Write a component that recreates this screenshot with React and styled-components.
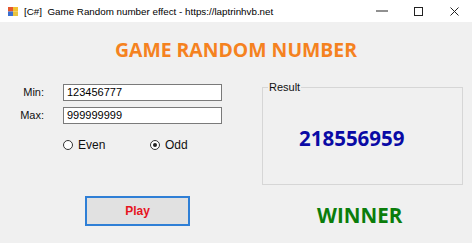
import styled, { createGlobalStyle } from "styled-components";

const GlobalStyle = createGlobalStyle`
  html, body {
    margin: 0;
    padding: 0;
    background: #ffffff;
  }
  * {
    box-sizing: border-box;
  }
`;

const Window = styled.div`
  width: 472px;
  height: 243px;
  display: flex;
  flex-direction: column;
  background: #f0f0f0;
  font-family: "Liberation Sans", Arial, sans-serif;
  color: #000;
`;

const TitleBar = styled.div`
  height: 22px;
  background: #ffffff;
  display: flex;
  align-items: center;
  padding-left: 8px;
`;

const TitleText = styled.div`
  margin-left: 6px;
  font-family: "Liberation Sans", Arial, sans-serif;
  font-size: 9.8px;
  color: #000;
  white-space: pre;
  flex: 1;
`;

const Caption = styled.div`
  display: flex;
  height: 100%;
`;

const CaptionButton = styled.div`
  width: 36px;
  height: 100%;
  display: flex;
  align-items: center;
  justify-content: center;
`;

const Body = styled.div`
  flex: 1;
  display: flex;
  flex-direction: column;
`;

const Heading = styled.h1`
  margin: 16px 0 0;
  text-align: center;
  font-family: "Open Sans", sans-serif;
  font-weight: 700;
  font-size: 19.4px;
  line-height: 24px;
  color: #f5821f;
`;

const Content = styled.div`
  display: flex;
  margin-top: 19px;
`;

const LeftCol = styled.div`
  width: 262px;
  display: flex;
  flex-direction: column;
  padding-top: 3px;
`;

const Fields = styled.div`
  display: grid;
  grid-template-columns: 44px 159px;
  column-gap: 19px;
  row-gap: 6px;
`;

const Label = styled.label`
  font-size: 11px;
  line-height: 17px;
  text-align: right;
  color: #111;
`;

const TextBox = styled.div`
  height: 17px;
  border: 1px solid #7a7a7a;
  background: #ffffff;
  font-size: 11px;
  line-height: 15px;
  padding-left: 3px;
  color: #000;
`;

const Options = styled.div`
  display: flex;
  margin: 14px 0 0 63px;
  height: 14px;
  align-items: center;
`;

const Option = styled.div`
  display: flex;
  align-items: center;
  width: ${(p) => p.width}px;
  font-size: 12px;
  color: #111;
`;

const Radio = styled.span`
  width: 10px;
  height: 10px;
  border-radius: 50%;
  border: 1px solid #333;
  background: #fff;
  margin-right: 5px;
  display: flex;
  align-items: center;
  justify-content: center;
  &::after {
    content: "";
    width: 4px;
    height: 4px;
    border-radius: 50%;
    background: ${(p) => (p.checked ? "#222" : "transparent")};
  }
`;

const PlayButton = styled.div`
  margin: 44px 0 0 85px;
  width: 105px;
  height: 30px;
  border: 2px solid #2f7fd6;
  background: #e1e1e1;
  display: flex;
  align-items: center;
  justify-content: center;
  font-weight: 700;
  font-size: 12px;
  color: #e6141e;
`;

const RightCol = styled.div`
  display: flex;
  flex-direction: column;
`;

const GroupBox = styled.fieldset`
  margin: 0;
  width: 201px;
  height: 104px;
  border: 1px solid #d6d6d6;
  padding: 0;
`;

const Legend = styled.legend`
  margin-left: 5px;
  padding: 0 1px;
  font-size: 11px;
  line-height: 13px;
  color: #111;
`;

const ResultArea = styled.div`
  height: 88px;
  display: flex;
  align-items: center;
  padding-left: 36px;
`;

const ResultNumber = styled.div`
  font-family: "Open Sans", sans-serif;
  font-weight: 700;
  font-size: 20.5px;
  color: #0a0aa5;
`;

const Winner = styled.div`
  margin: 18px 0 0 55px;
  font-family: "Open Sans", sans-serif;
  font-weight: 700;
  font-size: 20.6px;
  line-height: 24px;
  color: #0b7d0b;
`;

const AppIcon = () => (
  <svg width="10" height="9" viewBox="0 0 10 9">
    <rect x="0" y="0" width="5" height="4.5" fill="#e4572e" />
    <rect x="5" y="0" width="5" height="4.5" fill="#f2c230" />
    <rect x="0" y="4.5" width="5" height="4.5" fill="#3b6fd0" />
    <rect x="5" y="4.5" width="5" height="4.5" fill="#e8c440" />
  </svg>
);

export default function App() {
  return (
    <>
      <GlobalStyle />
      <Window>
        <TitleBar>
          <AppIcon />
          <TitleText>[C#]  Game Random number effect - https://laptrinhvb.net</TitleText>
          <Caption>
            <CaptionButton>
              <svg width="12" height="2" viewBox="0 0 12 2">
                <rect x="0" y="0.5" width="12" height="1" fill="#222" />
              </svg>
            </CaptionButton>
            <CaptionButton>
              <svg width="9" height="9" viewBox="0 0 9 9">
                <rect x="0.5" y="0.5" width="8" height="8" fill="none" stroke="#222" />
              </svg>
            </CaptionButton>
            <CaptionButton>
              <svg width="9" height="9" viewBox="0 0 9 9">
                <path d="M0.5 0.5 L8.5 8.5 M8.5 0.5 L0.5 8.5" stroke="#222" strokeWidth="1" />
              </svg>
            </CaptionButton>
          </Caption>
        </TitleBar>
        <Body>
          <Heading>GAME RANDOM NUMBER</Heading>
          <Content>
            <LeftCol>
              <Fields>
                <Label>Min:</Label>
                <TextBox>123456777</TextBox>
                <Label>Max:</Label>
                <TextBox>999999999</TextBox>
              </Fields>
              <Options>
                <Option width={87}>
                  <Radio />
                  Even
                </Option>
                <Option width={60}>
                  <Radio checked />
                  Odd
                </Option>
              </Options>
              <PlayButton>Play</PlayButton>
            </LeftCol>
            <RightCol>
              <GroupBox>
                <Legend>Result</Legend>
                <ResultArea>
                  <ResultNumber>218556959</ResultNumber>
                </ResultArea>
              </GroupBox>
              <Winner>WINNER</Winner>
            </RightCol>
          </Content>
        </Body>
      </Window>
    </>
  );
}
